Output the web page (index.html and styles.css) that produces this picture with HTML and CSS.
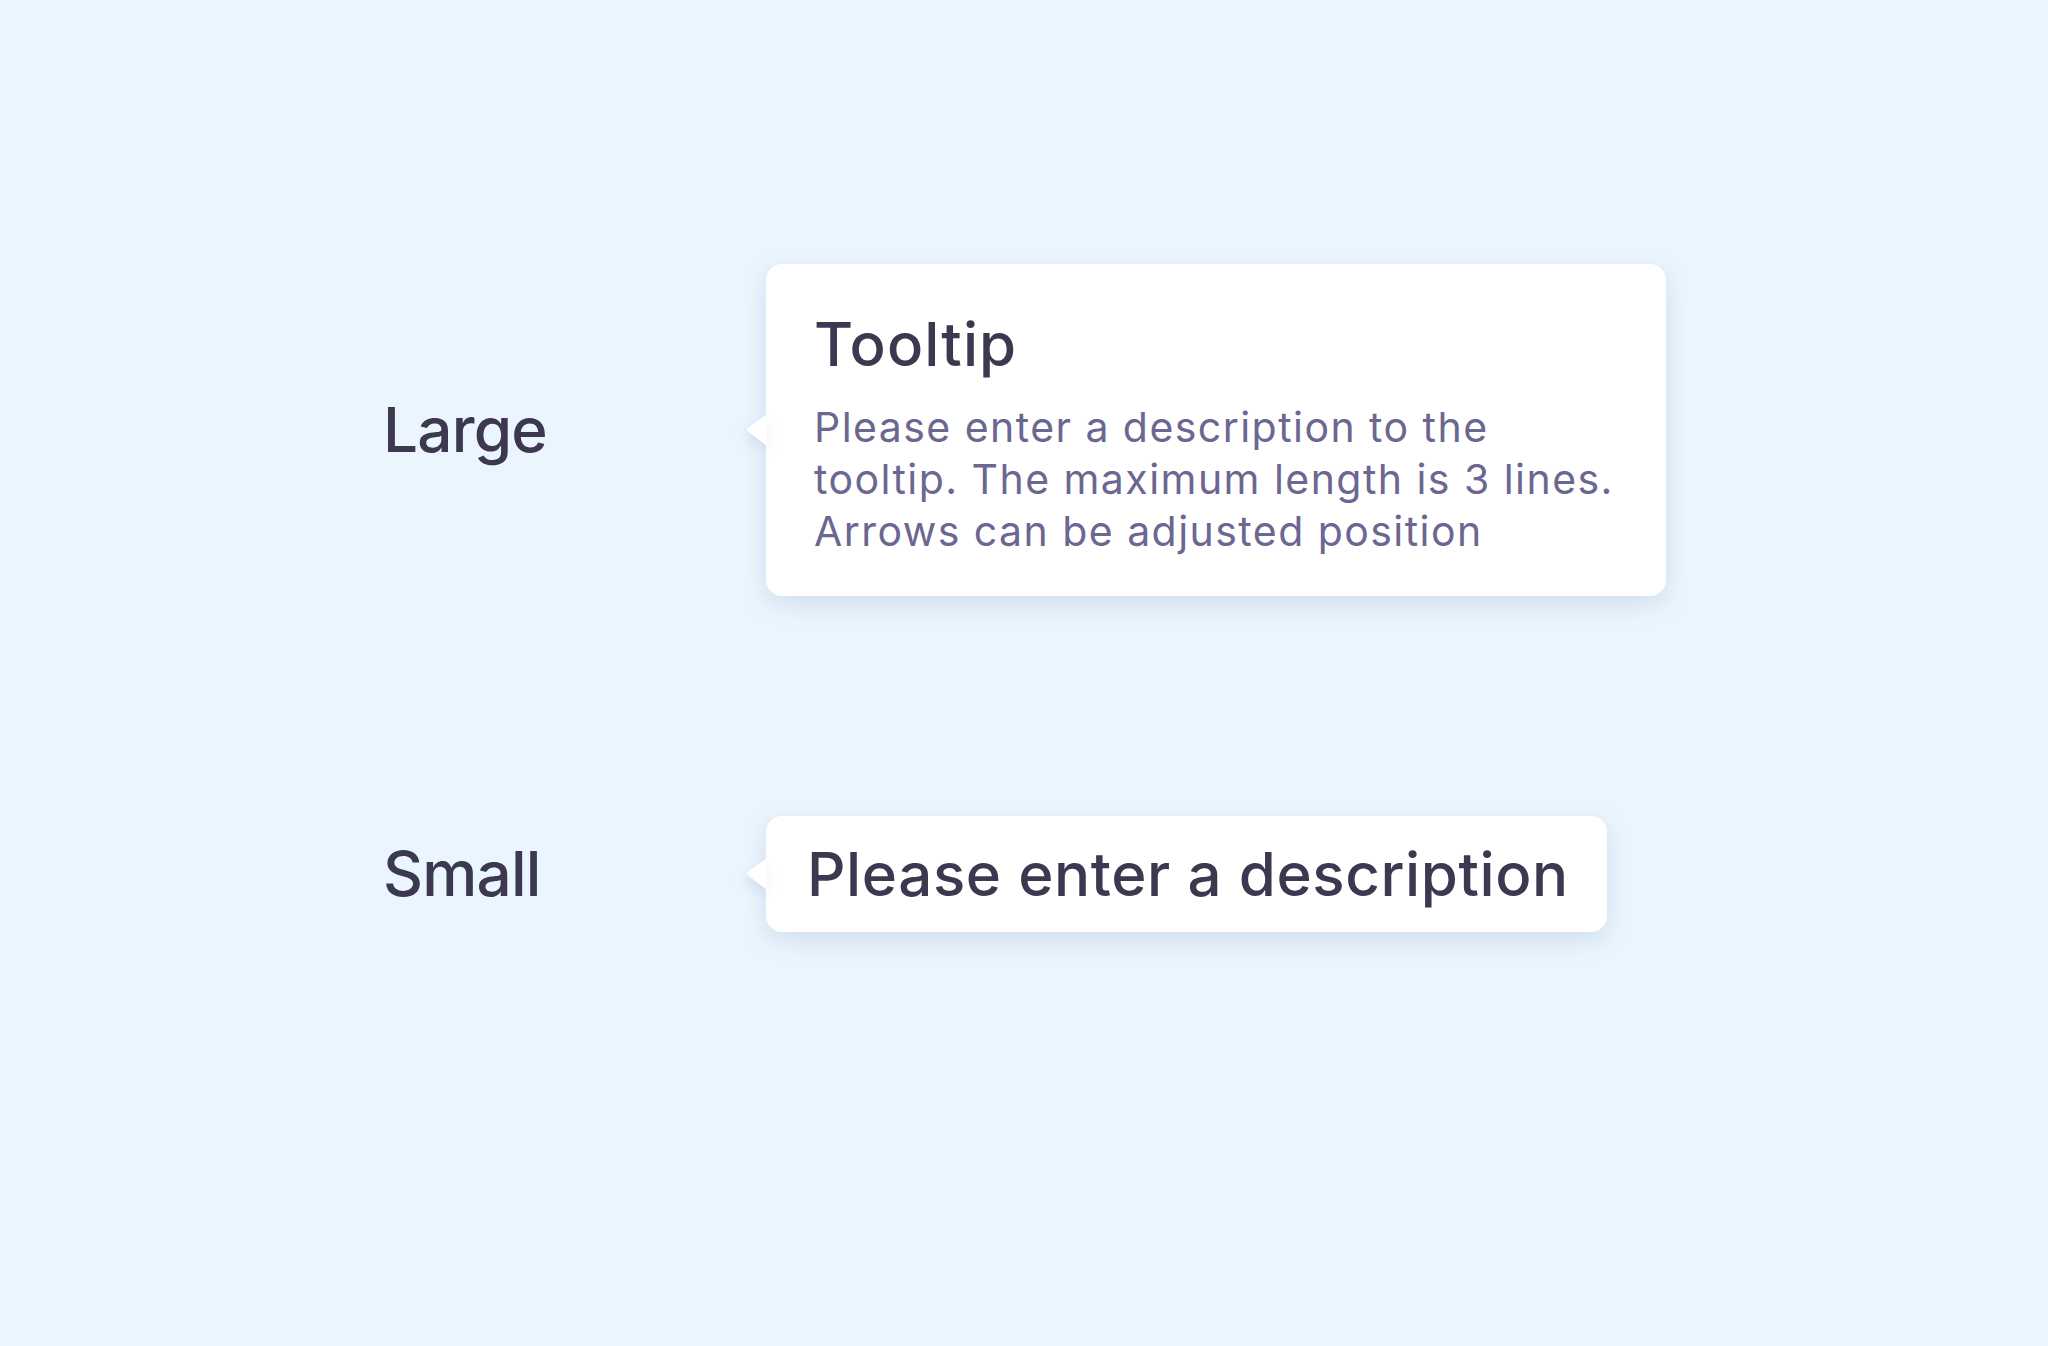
FILE: index.html
```html
<!DOCTYPE html>
<html lang="en">
<head>
<meta charset="utf-8">
<title>Tooltip</title>
<link rel="stylesheet" href="styles.css">
</head>
<body>
<main class="page">
  <section class="row row-large">
    <div class="label">Large</div>
    <div class="tip tip-large">
      <svg class="arrow" width="22" height="32" viewBox="0 0 22 32"><path d="M21 0 L2.2 13.6 Q0 15.5 2.2 17.4 L21 32 Z" fill="#ffffff"/></svg>
      <div class="tip-title">Tooltip</div>
      <div class="tip-desc">Please enter a description to the<br>tooltip. The maximum length is 3 lines.<br>Arrows can be adjusted position</div>
    </div>
  </section>
  <section class="row row-small">
    <div class="label">Small</div>
    <div class="tip tip-small">
      <svg class="arrow" width="22" height="32" viewBox="0 0 22 32"><path d="M21 0 L2.2 13.6 Q0 15.5 2.2 17.4 L21 32 Z" fill="#ffffff"/></svg>
      <div class="tip-text">Please enter a description</div>
    </div>
  </section>
</main>
</body>
</html>
```
FILE: styles.css
```css
html, body {
  margin: 0;
  padding: 0;
}
body {
  background: #ebf5fd;
  font-family: Inter, "Noto Sans", "Liberation Sans", sans-serif;
  width: 2048px;
  height: 1346px;
  overflow: hidden;
}
.page {
  display: flex;
  flex-direction: column;
  padding: 264px 0 0 383px;
}
.row {
  display: flex;
  align-items: center;
}
.row-small {
  margin-top: 220px;
}
.label {
  width: 383px;
  font-size: 62px;
  font-weight: 500;
  color: #3c3850;
  letter-spacing: -0.8px;
  line-height: 76px;
}
.tip {
  position: relative;
  background: #ffffff;
  border-radius: 16px;
  box-shadow: 0 8px 22px rgba(120, 140, 200, 0.22);
}
.arrow {
  position: absolute;
  left: -20px;
  top: 50%;
  margin-top: -16px;
  filter: drop-shadow(-2px 6px 6px rgba(120, 140, 200, 0.18));
}
.tip-large {
  width: 900px;
  box-sizing: border-box;
  padding: 44px 40px 39px 48px;
}
.tip-title {
  font-size: 60px;
  font-weight: 500;
  color: #3c3850;
  line-height: 72px;
  letter-spacing: 1.1px;
}
.tip-desc {
  margin-top: 21px;
  font-size: 41px;
  font-weight: 400;
  color: #6b6790;
  line-height: 52px;
  letter-spacing: 1.45px;
}
.tip-small {
  padding: 20px 38px 20px 41px;
}
.tip-text {
  font-size: 60px;
  font-weight: 500;
  color: #3c3850;
  line-height: 76px;
  letter-spacing: 0.6px;
  white-space: nowrap;
}
```
